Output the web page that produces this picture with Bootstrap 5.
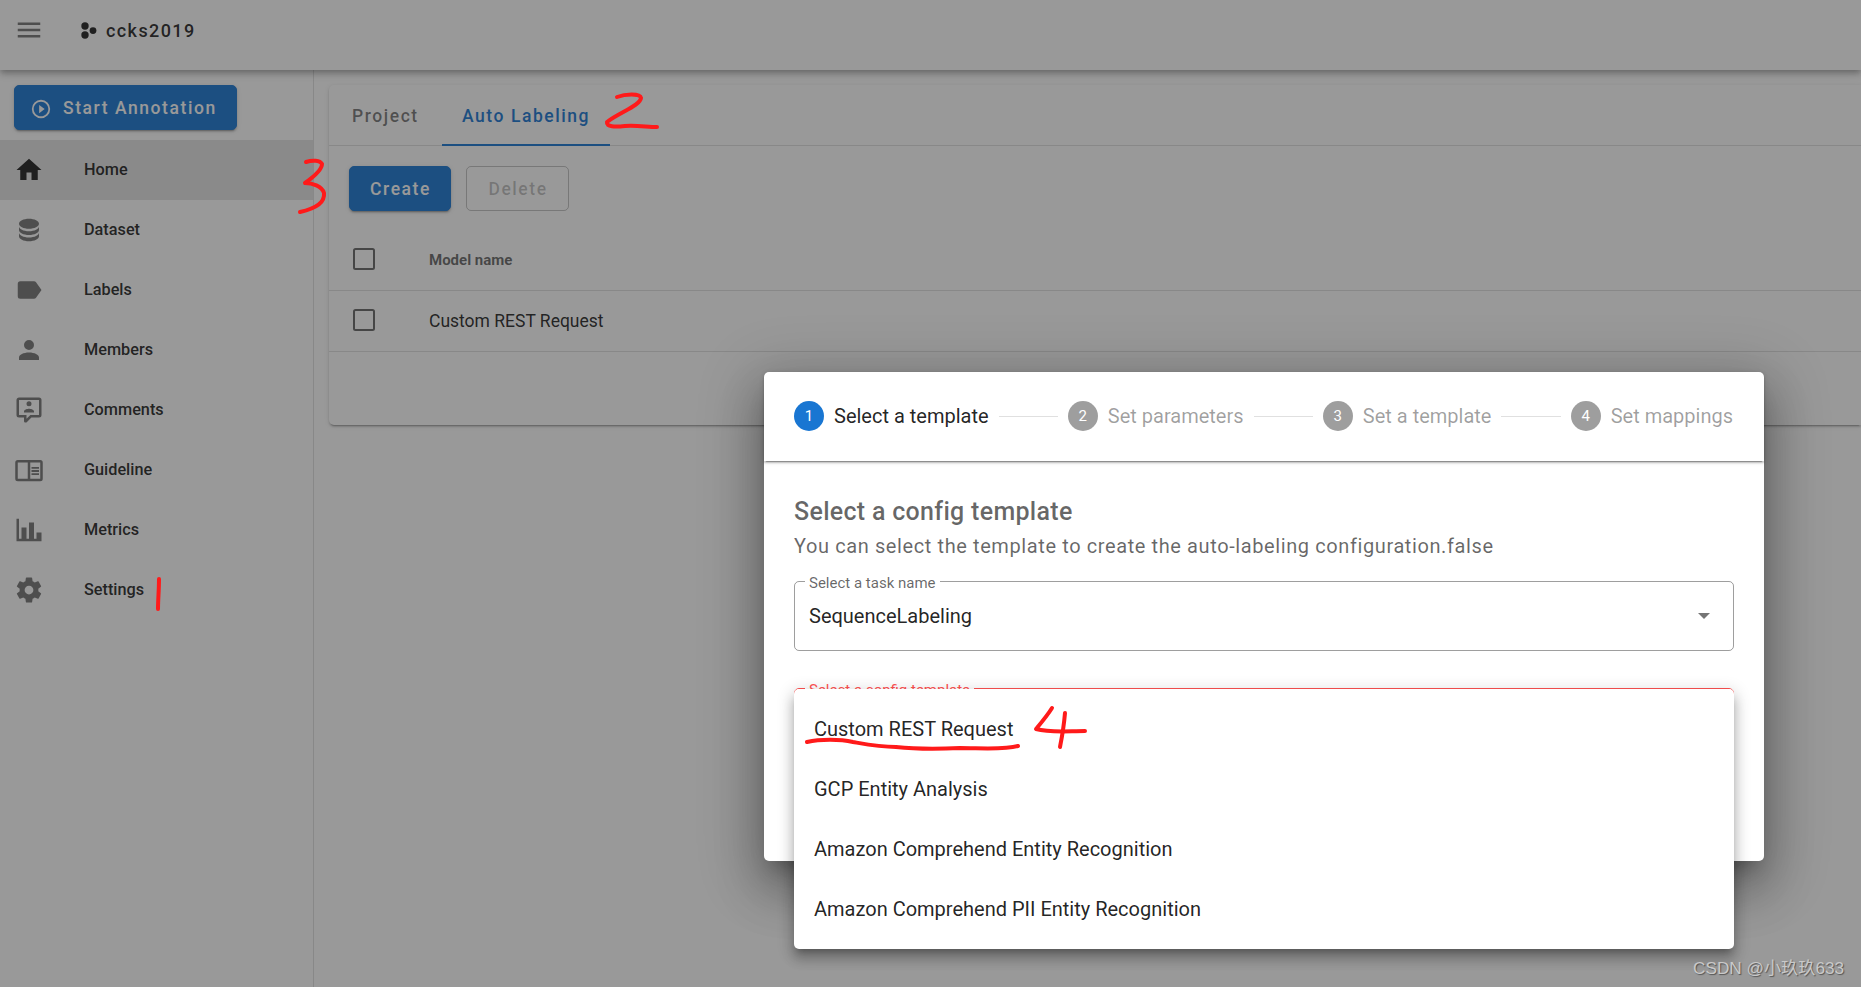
<!doctype html>
<html lang="en">
<head>
<meta charset="utf-8">
<title>ccks2019 - Auto Labeling</title>
<link href="https://cdn.jsdelivr.net/npm/bootstrap@5.3.0/dist/css/bootstrap.min.css" rel="stylesheet">
<style>
html,body{height:987px;overflow:hidden}
body{font-family:Roboto,"Noto Sans CJK SC",sans-serif;background:#fff;color:rgba(0,0,0,.87);position:relative}
svg{fill:currentColor;display:block}
.app-top{height:70px;padding:0 0 10px 14px;background:#fff;box-shadow:0 2.5px 5px -1px rgba(0,0,0,.2),0 5px 6px 0 rgba(0,0,0,.14),0 1px 12px 0 rgba(0,0,0,.12);position:relative;z-index:2;justify-content:flex-start}
.burger{width:30px;height:30px;color:rgba(0,0,0,.54)}
.logo-dots{width:16px;height:17px;margin-left:37px;color:rgba(0,0,0,.87)}
.brand-name{font-size:18px;font-weight:500;letter-spacing:1.4px;margin-left:9px;padding-top:2px;line-height:1;color:rgba(0,0,0,.87)}
.app-body{height:917px}
.side{width:314px;flex:none;border-right:1px solid rgba(0,0,0,.12);padding-top:15px}
.btn-go,.btn-act{font-size:17.5px;font-weight:500;letter-spacing:1.56px;border-radius:5px;line-height:1;display:inline-flex;align-items:center;height:45px;box-shadow:0 3px 1px -2px rgba(0,0,0,.2),0 2px 2px 0 rgba(0,0,0,.14),0 1px 5px 0 rgba(0,0,0,.12)}
.btn-primary.btn-go,.btn-primary.btn-act{background:#1976d2;border-color:#1976d2;color:#fff}
.btn-go{width:223px;margin-left:14px;margin-bottom:10px;padding:2px 0 0 15px}
.btn-go svg{width:22px;height:22px;margin-right:11px}
.side-list{border-radius:0}
.side-list .list-group-item{height:60px;padding:0 0 0 14px;border:0;display:flex;align-items:center;font-size:16.25px;font-weight:500;color:rgba(0,0,0,.87);background:transparent}
.side-list .list-group-item svg{width:30px;height:30px;margin-right:40px;color:rgba(0,0,0,.54);flex:none}
.side-list .list-group-item.on{background:#e4e4e4}
.side-list .list-group-item.on svg{color:rgba(0,0,0,.87)}
.main-area{flex:1;min-width:0;padding:15px 0 0 15px}
.panel{height:340px;border:0;border-radius:5px 0 0 5px;box-shadow:0 3px 1px -2px rgba(0,0,0,.2),0 2px 2px 0 rgba(0,0,0,.14),0 1px 5px 0 rgba(0,0,0,.12)}
.tab-row{height:61px;border-bottom:1px solid rgba(0,0,0,.12);padding:0}
.tab-link{height:61px;display:flex;align-items:center;font-size:17.5px;font-weight:500;letter-spacing:1.56px;color:rgba(0,0,0,.54);padding:1px 20px 0 23px;border:0;background:none}
.tab-link.on{color:#1976d2;border-bottom:2.5px solid #1976d2;padding:3px 20px 0 20px;margin-left:0}
.tab-link.first{width:113px}
.tools{padding:20px 20px 0;gap:15px}
.btn-primary.btn-act{width:102px;justify-content:center;padding:2px 0 0 1px}
.btn-act.off{width:103px;justify-content:center;padding:2px 0 0 1px;background:transparent;border:1.25px solid rgba(0,0,0,.24);color:rgba(0,0,0,.26);box-shadow:none;opacity:1}
.grid-tb{margin:19px 0 0;--bs-table-bg:transparent}
.grid-tb th,.grid-tb td{height:60px;padding:0;vertical-align:middle;border-bottom:1px solid rgba(0,0,0,.12)}
.grid-tb td{height:61px;padding-top:2px;font-size:17.5px;color:rgba(0,0,0,.87)}
.grid-tb th{font-size:15px;font-weight:700;color:rgba(0,0,0,.6)}
.grid-tb .chk{width:100px;padding-left:24px}
.tick{width:22px;height:22px;border:2.5px solid rgba(0,0,0,.6);border-radius:2.5px;margin-top:-2px}
.grid-tb td .tick{margin-top:-4px}
.dim{position:absolute;inset:0;background:rgba(33,33,33,.46);z-index:5}
.dialog-box{position:absolute;left:764px;top:372px;width:1000px;height:489px;background:#fff;border-radius:5px;z-index:6;box-shadow:0 14px 19px -9px rgba(0,0,0,.28),0 30px 47px 4px rgba(0,0,0,.2),0 11px 57px 12px rgba(0,0,0,.2)}
.stepper{height:89px;padding:0 31px 1px 30px;gap:10px;border-radius:5px 5px 0 0;box-shadow:0 3px 1px -2px rgba(0,0,0,.3),0 2px 2px 0 rgba(0,0,0,.18),0 1px 5px 0 rgba(0,0,0,.14);position:relative}
.dot{width:30px;height:30px;border-radius:50%;background:rgba(0,0,0,.38);color:#fff;font-size:15px;display:flex;align-items:center;justify-content:center;flex:none}
.dot.on{background:#1976d2}
.step-name{font-size:20px;color:rgba(0,0,0,.38);white-space:nowrap;line-height:1}
.step-name.on{color:rgba(0,0,0,.87)}
.step-rule{flex:1;height:1px;background:rgba(0,0,0,.12);min-width:0}
.dialog-body{padding:32px 30px 0}
.dlg-title{font-size:25px;font-weight:500;line-height:38px;color:rgba(0,0,0,.6);margin:0;letter-spacing:.3px}
.dlg-sub{font-size:20px;line-height:30px;color:rgba(0,0,0,.6);letter-spacing:.6px;margin:0}
.field-box{position:relative;height:70px;border:1.25px solid rgba(0,0,0,.38);border-radius:5px;margin-top:20px;padding:0 14px;display:flex;align-items:center;justify-content:space-between}
.field-box.err{border-color:#ff5252;margin-top:37px}
.field-tag{position:absolute;top:-7.5px;left:10px;padding:0 4px;background:#fff;font-size:15px;line-height:17px;color:rgba(0,0,0,.6)}
.field-box.err .field-tag{color:#ff5252}
.field-val{font-size:20px;color:rgba(0,0,0,.87);line-height:1}
.caret-down{width:0;height:0;border-left:6.5px solid transparent;border-right:6.5px solid transparent;border-top:6.5px solid rgba(0,0,0,.54);margin-right:9px}
.pick-menu{position:absolute;top:317px;left:30px;right:30px;padding:10px 0;background:#fff;border-radius:5px;z-index:3;box-shadow:0 6px 6px -4px rgba(0,0,0,.25),0 10px 12px 1px rgba(0,0,0,.18),0 4px 16px 3px rgba(0,0,0,.14)}
.pick-menu .list-group-item{height:60px;padding:0 20px;border:0;font-size:20px;display:flex;align-items:center;color:rgba(0,0,0,.87);background:transparent}
.scribbles{position:absolute;left:0;top:0;z-index:8;pointer-events:none;fill:none}
.scribbles path{stroke:#ff1a1a;stroke-width:4;stroke-linecap:round;stroke-linejoin:round;fill:none}
.stamp{position:absolute;left:1693px;top:958px;z-index:9;font-family:"Liberation Sans","Noto Sans CJK SC",sans-serif;font-size:17.2px;line-height:20px;color:#c9c9c9;text-shadow:1px 1px 1px rgba(0,0,0,.45);white-space:nowrap}
</style>
</head>
<body>
<nav class="navbar app-top d-flex align-items-center">
  <svg class="burger" viewBox="0 0 24 24"><path d="M3,6H21V8H3V6M3,11H21V13H3V11M3,16H21V18H3V16Z"/></svg>
  <svg class="logo-dots" viewBox="0 0 16 17"><circle cx="4" cy="4" r="3.7"/><circle cx="4" cy="13" r="3.7"/><circle cx="12" cy="8.6" r="3.4"/></svg>
  <span class="brand-name">ccks2019</span>
</nav>
<div class="d-flex app-body">
  <aside class="side">
    <button class="btn btn-primary btn-go" type="button"><svg viewBox="0 0 24 24"><path d="M10,16.5L16,12L10,7.5V16.5M12,2A10,10 0 0,0 2,12A10,10 0 0,0 12,22A10,10 0 0,0 22,12A10,10 0 0,0 12,2M12,20C7.59,20 4,16.41 4,12C4,7.59 7.59,4 12,4C16.41,4 20,7.59 20,12C20,16.41 16.41,20 12,20Z"/></svg>Start Annotation</button>
    <div class="list-group side-list">
      <div class="list-group-item on"><svg viewBox="0 0 24 24"><path d="M10,20V14H14V20H19V12H22L12,3L2,12H5V20H10Z"/></svg>Home</div>
      <div class="list-group-item"><svg viewBox="0 0 24 24"><path d="M12,3C7.58,3 4,4.79 4,7C4,9.21 7.58,11 12,11C16.42,11 20,9.21 20,7C20,4.79 16.42,3 12,3M4,9V12C4,14.21 7.58,16 12,16C16.42,16 20,14.21 20,12V9C20,11.21 16.42,13 12,13C7.58,13 4,11.21 4,9M4,14V17C4,19.21 7.58,21 12,21C16.42,21 20,19.21 20,17V14C20,16.21 16.42,18 12,18C7.58,18 4,16.21 4,14Z"/></svg>Dataset</div>
      <div class="list-group-item"><svg viewBox="0 0 24 24"><path d="M17.63,5.84C17.27,5.33 16.67,5 16,5H5A2,2 0 0,0 3,7V17A2,2 0 0,0 5,19H16C16.67,19 17.27,18.66 17.63,18.15L22,12L17.63,5.84Z"/></svg>Labels</div>
      <div class="list-group-item"><svg viewBox="0 0 24 24"><path d="M12,4A4,4 0 0,1 16,8A4,4 0 0,1 12,12A4,4 0 0,1 8,8A4,4 0 0,1 12,4M12,14C16.42,14 20,15.79 20,18V20H4V18C4,15.79 7.58,14 12,14Z"/></svg>Members</div>
      <div class="list-group-item"><svg viewBox="0 0 24 24"><path d="M9,22A1,1 0 0,1 8,21V18H4A2,2 0 0,1 2,16V4C2,2.89 2.9,2 4,2H20A2,2 0 0,1 22,4V16A2,2 0 0,1 20,18H13.9L10.2,21.71C10,21.9 9.75,22 9.5,22V22H9M10,16V19.08L13.08,16H20V4H4V16H10M16,14H8V13C8,11.67 10.67,11 12,11C13.33,11 16,11.67 16,13V14M12,5A2,2 0 0,1 14,7A2,2 0 0,1 12,9A2,2 0 0,1 10,7A2,2 0 0,1 12,5Z"/></svg>Comments</div>
      <div class="list-group-item"><svg viewBox="0 0 24 24"><path d="M21 4H3A2 2 0 0 0 1 6V19A2 2 0 0 0 3 21H21A2 2 0 0 0 23 19V6A2 2 0 0 0 21 4M3 19V6H11V19H3M21 19H13V6H21V19M14 9.5H20V11H14V9.5M14 12H20V13.5H14V12M14 14.5H20V16H14V14.5Z"/></svg>Guideline</div>
      <div class="list-group-item"><svg viewBox="0 0 24 24"><path d="M22,21H2V3H4V19H6V10H10V19H12V6H16V19H18V14H22V21Z"/></svg>Metrics</div>
      <div class="list-group-item"><svg viewBox="0 0 24 24"><path d="M12,15.5A3.5,3.5 0 0,1 8.5,12A3.5,3.5 0 0,1 12,8.5A3.5,3.5 0 0,1 15.5,12A3.5,3.5 0 0,1 12,15.5M19.43,12.97C19.47,12.65 19.5,12.33 19.5,12C19.5,11.67 19.47,11.34 19.43,11L21.54,9.37C21.73,9.22 21.78,8.95 21.66,8.73L19.66,5.27C19.54,5.05 19.27,4.96 19.05,5.05L16.56,6.05C16.04,5.66 15.5,5.32 14.87,5.07L14.5,2.42C14.46,2.18 14.25,2 14,2H10C9.75,2 9.54,2.18 9.5,2.42L9.13,5.07C8.5,5.32 7.96,5.66 7.44,6.05L4.95,5.05C4.73,4.96 4.46,5.05 4.34,5.27L2.34,8.73C2.21,8.95 2.27,9.22 2.46,9.37L4.57,11C4.53,11.34 4.5,11.67 4.5,12C4.5,12.33 4.53,12.65 4.57,12.97L2.46,14.63C2.27,14.78 2.21,15.05 2.34,15.27L4.34,18.73C4.46,18.95 4.73,19.03 4.95,18.95L7.44,17.94C7.96,18.34 8.5,18.68 9.13,18.93L9.5,21.58C9.54,21.82 9.75,22 10,22H14C14.25,22 14.46,21.82 14.5,21.58L14.87,18.93C15.5,18.67 16.04,18.34 16.56,17.94L19.05,18.95C19.27,19.03 19.54,18.95 19.66,18.73L21.66,15.27C21.78,15.05 21.73,14.78 21.54,14.63L19.43,12.97Z"/></svg>Settings</div>
    </div>
  </aside>
  <main class="main-area">
    <div class="card panel">
      <div class="d-flex tab-row">
        <div class="tab-link first">Project</div>
        <div class="tab-link on">Auto Labeling</div>
      </div>
      <div class="d-flex tools">
        <button class="btn btn-primary btn-act" type="button">Create</button>
        <button class="btn btn-act off" type="button" disabled>Delete</button>
      </div>
      <table class="table grid-tb">
        <thead><tr><th class="chk"><div class="tick"></div></th><th>Model name</th></tr></thead>
        <tbody><tr><td class="chk"><div class="tick"></div></td><td>Custom REST Request</td></tr></tbody>
      </table>
    </div>
  </main>
</div>
<div class="dim"></div>
<div class="dialog-box">
  <div class="d-flex align-items-center stepper">
    <span class="dot on">1</span><span class="step-name on">Select a template</span><span class="step-rule"></span>
    <span class="dot">2</span><span class="step-name">Set parameters</span><span class="step-rule"></span>
    <span class="dot">3</span><span class="step-name">Set a template</span><span class="step-rule"></span>
    <span class="dot">4</span><span class="step-name">Set mappings</span>
  </div>
  <div class="dialog-body">
    <h2 class="dlg-title">Select a config template</h2>
    <p class="dlg-sub">You can select the template to create the auto-labeling configuration.false</p>
    <div class="field-box"><span class="field-tag">Select a task name</span><span class="field-val">SequenceLabeling</span><span class="caret-down"></span></div>
    <div class="field-box err"><span class="field-tag">Select a config template</span></div>
  </div>
  <div class="list-group pick-menu">
    <div class="list-group-item">Custom REST Request</div>
    <div class="list-group-item">GCP Entity Analysis</div>
    <div class="list-group-item">Amazon Comprehend Entity Recognition</div>
    <div class="list-group-item">Amazon Comprehend PII Entity Recognition</div>
  </div>
</div>
<svg class="scribbles" width="1861" height="987" viewBox="0 0 1861 987" aria-hidden="true">
  <path d="M306 162C312 160 320 160 322 164C322 170 312 178 305 183C312 183 322 186 324 193C325 202 318 208 300 212"/>
  <path d="M159 579C159 590 158 600 158 609"/>
  <path d="M617 97C625 94 640 93 641 98C640 106 620 112 607 122C606 127 615 127 625 126C635 125 648 127 657 127"/>
  <path d="M1052 708C1047 716 1041 723 1036 729C1050 733 1068 731 1085 731"/>
  <path d="M1065 713C1064 725 1062 737 1060 747"/>
  <path d="M807 742C820 739 840 739 853 742C870 745 880 747 896 747C915 749 940 749 960 748C980 748 1005 750 1018 746"/>
</svg>
<div class="stamp">CSDN @小玖玖633</div>
<script src="https://cdn.jsdelivr.net/npm/bootstrap@5.3.0/dist/js/bootstrap.bundle.min.js"></script>
</body>
</html>
